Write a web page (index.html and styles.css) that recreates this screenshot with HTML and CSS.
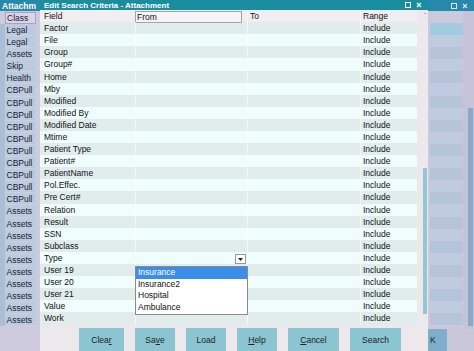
FILE: index.html
```html
<!doctype html>
<html>
<head>
  <meta charset="utf-8">
  <title>Edit Search Criteria - Attachment</title>
  <link rel="stylesheet" href="styles.css">
</head>
<body>
<div class="screen">
  <div class="app">
    <div class="app-title">
      <span class="app-name">Attachm</span>
      <span class="win-icons dim">
        <svg width="6" height="6" viewBox="0 0 6 6"><rect x="0.5" y="0.5" width="5" height="5" fill="none" stroke="currentColor"/></svg>
        <svg width="6" height="6" viewBox="0 0 6 6"><path d="M1 1L5 5M5 1L1 5" stroke="currentColor" stroke-width="1.2"/></svg>
      </span>
    </div>
    <div class="app-body">
      <div class="class-col">
        <div class="class-head">Class</div>
        <div class="class-list" id="classList"></div>
      </div>
      <div class="app-mid"></div>
      <div class="app-right">
        <div class="app-grid">
          <div class="app-rows" id="appRows"></div>
          <div class="app-scroll"><div class="app-thumb"></div></div>
        </div>
        <div class="app-foot"><span class="app-btn">K</span></div>
      </div>
    </div>
  </div>

  <div class="dialog">
    <div class="dlg-title">
      <span>Edit Search Criteria - Attachment</span>
      <span class="win-icons">
        <svg width="6" height="6" viewBox="0 0 6 6"><rect x="0.5" y="0.5" width="5" height="5" fill="none" stroke="currentColor"/></svg>
        <svg width="6" height="6" viewBox="0 0 6 6"><path d="M1 1L5 5M5 1L1 5" stroke="currentColor" stroke-width="1.2"/></svg>
      </span>
    </div>
    <div class="dlg-body">
      <div class="criteria">
        <div class="crit-head">
          <div class="cell">Field</div>
          <div class="cell sorted">From</div>
          <div class="cell">To</div>
          <div class="cell">Range</div>
        </div>
        <div id="critRows"></div>
      </div>
      <div class="dlg-scroll">
        <div class="scroll-arrow"></div>
        <div class="scroll-thumb"></div>
      </div>
    </div>
    <div class="dlg-buttons">
      <button class="btn">Clea<u>r</u></button>
      <button class="btn">Sa<u>v</u>e</button>
      <button class="btn">Load</button>
      <button class="btn"><u>H</u>elp</button>
      <button class="btn wide"><u>C</u>ancel</button>
      <button class="btn wide">Search</button>
    </div>
  </div>
</div>

<script>
  var rows = [
    ["Legal", "Factor"], ["Legal", "File"], ["Assets", "Group"], ["Skip", "Group#"],
    ["Health", "Home"], ["CBPull", "Mby"], ["CBPull", "Modified"], ["CBPull", "Modified By"],
    ["CBPull", "Modified Date"], ["CBPull", "Mtime"], ["CBPull", "Patient Type"],
    ["CBPull", "Patient#"], ["CBPull", "PatientName"], ["CBPull", "Pol.Effec."],
    ["CBPull", "Pre Cert#"], ["Assets", "Relation"], ["Assets", "Result"], ["Assets", "SSN"],
    ["Assets", "Subclass"], ["Assets", "Type"], ["Assets", "User 19"], ["Assets", "User 20"],
    ["Assets", "User 21"], ["Assets", "Value"], ["Assets", "Work"]
  ];
  var options = ["Insurance", "Insurance2", "Hospital", "Ambulance"];

  var classList = document.getElementById("classList");
  var appRows = document.getElementById("appRows");
  var critRows = document.getElementById("critRows");

  rows.forEach(function (r, i) {
    var c = document.createElement("div");
    c.className = "class-cell";
    c.textContent = r[0];
    classList.appendChild(c);

    var a = document.createElement("div");
    a.className = "app-row" + (i % 2 ? " alt" : "") + (i === 0 ? " current" : "");
    appRows.appendChild(a);

    var row = document.createElement("div");
    row.className = "crit-row" + (i % 2 ? " alt" : "");
    row.innerHTML = '<div class="cell">' + r[1] + '</div><div class="cell from"></div>' +
      '<div class="cell"></div><div class="cell">Include</div>';
    if (r[1] === "Type") {
      var from = row.querySelector(".from");
      from.innerHTML = '<span class="combo-btn"><svg width="5" height="3" viewBox="0 0 5 3"><path d="M0 0H5L2.5 3Z" fill="#222"/></svg></span>';
      var list = document.createElement("div");
      list.className = "combo-list";
      options.forEach(function (o, j) {
        var item = document.createElement("div");
        item.className = "combo-item" + (j === 0 ? " selected" : "");
        item.textContent = o;
        list.appendChild(item);
      });
      from.appendChild(list);
    }
    critRows.appendChild(row);
  });
</script>
</body>
</html>
```

FILE: styles.css
```css
body {
  margin: 0;
  font-family: "Liberation Sans", Arial, sans-serif;
  font-size: 8.5px;
  color: #111;
  background: #cbc7db;
  overflow: hidden;
}

.screen {
  position: relative;
  width: 474px;
  height: 351px;
  overflow: hidden;
}

/* background window (masked) */

.app {
  display: flex;
  flex-direction: column;
  height: 351px;
}

.app-title {
  height: 11px;
  background: #2689ab;
  color: #fff;
  font-weight: bold;
  display: flex;
  align-items: center;
  justify-content: space-between;
  padding-left: 2px;
}

.win-icons {
  display: flex;
  gap: 5px;
  padding-right: 6px;
  color: #fff;
}

.win-icons.dim {
  color: #dfe6f0;
}

.app-body {
  flex: 1;
  display: flex;
}

.class-col {
  width: 40px;
  background: #cfcbdf;
  color: #1c1c36;
}

.class-head {
  margin: 1px 4px 0 5px;
  height: 10px;
  line-height: 10px;
  border: 1px solid #a6a4bc;
  background: #d9d5e6;
  padding-left: 1px;
}

.class-list {
  width: 36px;
  box-sizing: border-box;
  padding-left: 5px;
  background: #a9bfd6;
}

.class-cell {
  height: 12.1px;
  line-height: 12px;
  box-sizing: border-box;
  padding-left: 1.5px;
  background: #bccbdd;
  border-bottom: 1px solid #c7d1e1;
}

.app-mid {
  width: 388px;
}

.app-right {
  width: 46px;
  display: flex;
  flex-direction: column;
}

.app-grid {
  display: flex;
  height: 318px;
}

.app-rows {
  width: 35px;
  box-sizing: border-box;
  padding: 12px 0 0 2px;
  background: #cdc9dd;
}

.app-row {
  height: 12.1px;
  background: #b5c4d9;
}

.app-row.alt {
  background: #c1cbdf;
}

.app-row.current {
  background: #a0cbe0;
}

.app-scroll {
  width: 11px;
  background: #c7c3d9;
  padding: 97px 0 0 5px;
  box-sizing: border-box;
}

.app-thumb {
  width: 5px;
  height: 218px;
  background: #89a9c9;
}

.app-foot {
  flex: 1;
  display: flex;
}

.app-btn {
  width: 19px;
  background: #7daeca;
  color: #222;
  line-height: 22px;
  padding-left: 2px;
  box-sizing: border-box;
}

/* dialog */

.dialog {
  position: absolute;
  left: 40px;
  top: 0;
  width: 388px;
  height: 352px;
  display: flex;
  flex-direction: column;
  background: #ece8ec;
}

.dlg-title {
  height: 11px;
  background: #1a8e9f;
  color: #fff;
  font-weight: bold;
  font-size: 8px;
  display: flex;
  align-items: center;
  justify-content: space-between;
  padding-left: 4px;
}

.dlg-body {
  display: flex;
  height: 314.5px;
}

.criteria {
  width: 377px;
}

.crit-head,
.crit-row {
  display: grid;
  grid-template-columns: 95px 112px 113px 57px;
}

.crit-head {
  height: 12px;
  background: #f0eeee;
}

.crit-head .cell {
  line-height: 12px;
}

.crit-head .sorted {
  margin: 1px 5px 1px 0;
  line-height: 10px;
  border: 1px solid #a4a4a4;
  background: #f5f5f5;
  padding-left: 1px;
}

.crit-row {
  height: 12.1px;
  background: #e1eded;
}

.crit-row.alt {
  background: #effdfd;
}

.cell {
  padding-left: 2px;
  line-height: 12.1px;
  white-space: nowrap;
  border-left: 1px solid rgba(255, 255, 255, 0.55);
}

.cell:first-child {
  padding-left: 4px;
  border-left: 0;
}

.from {
  position: relative;
  display: flex;
  justify-content: flex-end;
  align-items: flex-end;
}

.combo-btn {
  width: 9px;
  height: 8px;
  margin-right: 1px;
  border: 1px solid #999;
  background: #fff;
  display: flex;
  align-items: center;
  justify-content: center;
}

.combo-list {
  position: absolute;
  left: -1px;
  top: calc(100% + 2px);
  width: 111px;
  border: 1px solid #8a8a8a;
  background: #fff;
  z-index: 2;
}

.combo-item {
  height: 11.7px;
  line-height: 11.7px;
  padding-left: 2px;
}

.combo-item.selected {
  background: #3b8deb;
  color: #fff;
}

.dlg-scroll {
  width: 11px;
  box-sizing: border-box;
  padding-left: 6px;
}

.scroll-arrow {
  width: 2px;
  height: 1px;
  margin: 3px 0 0 1px;
  background: #b0acb4;
}

.scroll-thumb {
  width: 4px;
  height: 146px;
  margin-top: 154px;
  background: #8ec8d2;
}

.dlg-buttons {
  display: flex;
  gap: 11px;
  padding: 3.5px 0 0 39px;
}

.btn {
  width: 40px;
  height: 24px;
  padding: 0;
  border: 0;
  background: #8ac5d1;
  color: #222;
  font: inherit;
}

.btn:first-child {
  width: 45px;
}

.btn.wide {
  width: 51px;
}
```
